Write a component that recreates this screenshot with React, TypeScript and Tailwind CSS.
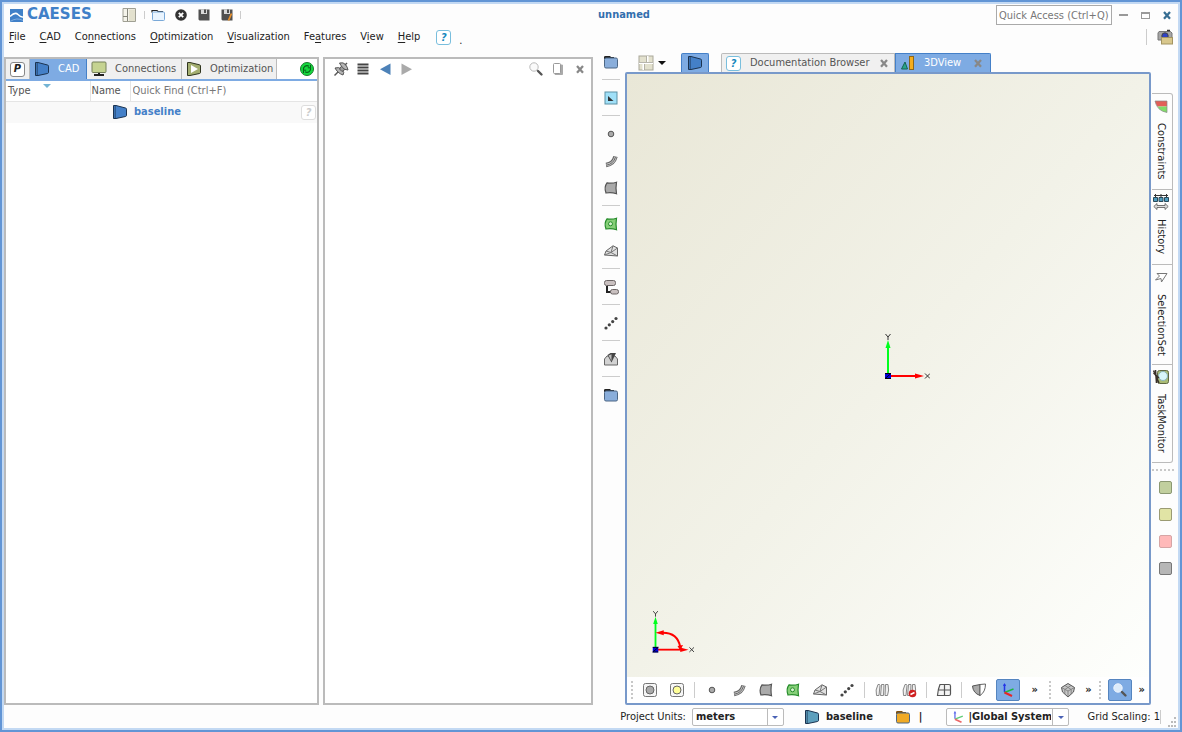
import type { ReactNode } from 'react'

type IconProps = { className?: string }

interface IconBoxProps extends IconProps {
  size?: number
  children: ReactNode
}

function IconBox({ size = 16, className = '', children }: IconBoxProps) {
  return (
    <svg width={size} height={size} viewBox="0 0 16 16" fill="none" className={`shrink-0 ${className}`} aria-hidden="true">
      {children}
    </svg>
  )
}

/* ---------- icons ---------- */

function Logo() {
  return (
    <div className="flex w-24 shrink-0 items-start gap-1">
      <svg width="13" height="13" viewBox="0 0 13 13" aria-hidden="true">
        <rect width="13" height="13" fill="#4080c8" />
        <path d="M0 7.500Q5 2.500 8 5.500T13 8" fill="none" stroke="#fff" strokeWidth="1.500" />
        <path d="M0 12.500Q7 8 13 11.500" fill="none" stroke="#8db8e6" strokeWidth="0.8" />
      </svg>
      <span className="font-['DejaVu_Sans',sans-serif] text-[15px] font-bold leading-[11px] text-[#4080c8]">CAESES</span>
    </div>
  )
}

function LayoutIcon({ className }: IconProps) {
  return (
    <IconBox className={className}>
      <path d="M2 1.500H14.500V14.500H2Z" fill="#f4f3ea" stroke="#a0a094" />
      <path d="M6.500 2V14M2 9.500H6.500" stroke="#85857b" />
      <rect x="8" y="2.500" width="6" height="11.500" fill="#e3e1ce" />
    </IconBox>
  )
}

function SplitIcon() {
  return (
    <IconBox>
      <rect x="1" y="1" width="14" height="14" fill="#e3e1ce" stroke="#aaa89a" />
      <path d="M9.500 1V8M5.500 8V15M1 8H15" stroke="#fff" strokeWidth="2" />
      <path d="M8.500 1V7M6.500 9V15M1 7.500H15" stroke="#99978a" strokeWidth=".7" />
    </IconBox>
  )
}

function FolderIcon({ fill = '#8aaedb', dark = '#222' }: { fill?: string; dark?: string }) {
  return (
    <IconBox>
      <path d="M1 5V3Q1 2 2.500 2H7L8 3H11V5Z" fill={dark} />
      <rect x="1.500" y="4" width="13" height="10" rx="1.500" fill={fill} stroke="#4d6785" />
    </IconBox>
  )
}

function OpenIcon() {
  return (
    <IconBox>
      <path d="M2 5.500V3.500H7L8 4.500H13" stroke="#222" strokeWidth="1.200" />
      <rect x="2.500" y="5" width="12" height="8.500" rx="1" fill="#e9f4fe" stroke="#7aa9d8" />
    </IconBox>
  )
}

function CloseCircleIcon() {
  return (
    <IconBox>
      <circle cx="8" cy="8" r="5.800" fill="#333" />
      <path d="M5.800 5.800 10.200 10.200M10.200 5.800 5.800 10.200" stroke="#fff" strokeWidth="1.800" />
    </IconBox>
  )
}

function SaveIcon({ pen = false }: { pen?: boolean }) {
  return (
    <IconBox>
      <path d="M2.500 2.500H13.500V13.500H3.500L2.500 12.500Z" fill="#505050" />
      <path d="M5 2.500H11V7H5Z" fill="#d8d8d8" />
      <path d="M8 2.500H10V6H8Z" fill="#505050" />
      {pen && <path d="M9.500 13.500 12.500 6.500" stroke="#e8902c" strokeWidth="1.800" />}
    </IconBox>
  )
}

function HelpIcon({ muted = false }: { muted?: boolean }) {
  return (
    <span
      className={`flex h-[15px] w-[15px] shrink-0 items-center justify-center rounded-[3px] border bg-white text-[11px] font-bold italic leading-none ${
        muted ? 'border-[#ddd] text-[#ccc]' : 'border-[#79bedd] text-[#1688bd]'
      }`}
    >
      ?
    </span>
  )
}

function BlockIcon({ fill = '#4480c8' }: { fill?: string }) {
  return (
    <IconBox>
      <path d="M1.500 1.500H4L13.500 4Q14.500 4.200 14.500 5.200V11.300Q14.500 12.300 13.500 12.500L4 14.500H1.500Z" fill={fill} stroke="#1b3350" />
      <path d="M3.200 2V14" stroke="#1b3350" strokeWidth=".7" />
    </IconBox>
  )
}

function MonitorIcon() {
  return (
    <IconBox>
      <rect x="1" y="1" width="14" height="10.500" rx="1" fill="#c5d391" stroke="#75805a" />
      <path d="M7 12H9V13H13V15H3V13H7Z" fill="#222" />
    </IconBox>
  )
}

function PlayIcon() {
  return (
    <IconBox>
      <path d="M1.500 1.500H4L13.500 3.800Q14.500 4 14.500 5V11.300Q14.500 12.300 13.500 12.500L4 14.500H1.500Z" fill="#a3ae70" stroke="#30351f" />
      <path d="M5 4 12 8 5 12Z" fill="#fff" />
    </IconBox>
  )
}

function RefreshIcon() {
  return (
    <IconBox>
      <circle cx="8" cy="8" r="6.500" fill="#14d83e" stroke="#187a2c" />
      <path d="M4.500 9A3.600 3.600 0 0 1 10 5.200M11.500 7A3.600 3.600 0 0 1 6 10.800" stroke="#075f19" strokeWidth="1.200" />
      <path d="M8.800 6.800H11.500V4M7.200 9.200H4.500V12" stroke="#075f19" />
    </IconBox>
  )
}

function PinIcon() {
  return (
    <IconBox>
      <g stroke="#555">
        <path d="M1.500 14.500 5.500 10.500" strokeWidth="1.500" />
        <path d="M2 7Q6 5.500 9 8.500T10 14Q7 13 5 11T2 7Z" fill="#b5b5b5" />
        <path d="M6.500 8 9 4.500 12.500 8 9 10.500Z" fill="#999" />
        <path d="M6.500 2Q10.500 1 12.500 3.500T15 9Q11.500 9 9.500 6.500T6.500 2Z" fill="#b5b5b5" />
        <path d="M12 4 14 2" strokeWidth="1.500" />
      </g>
    </IconBox>
  )
}

function ListIcon() {
  return (
    <IconBox>
      <path d="M2.500 3.500H13.500M2.500 6.500H13.500M2.500 9.500H13.500M2.500 12.500H13.500" stroke="#444" strokeWidth="2" />
    </IconBox>
  )
}

function TriangleIcon({ left = false }: { left?: boolean }) {
  return (
    <IconBox>
      {left ? <path d="M13.500 2.500V14L3 8.250Z" fill="#4d82b8" /> : <path d="M2.500 2.500V14L13 8.250Z" fill="#aaa" />}
    </IconBox>
  )
}

function SearchIcon({ light = false }: { light?: boolean }) {
  return (
    <IconBox>
      <circle cx="6" cy="6" r="4.200" fill={light ? '#dcebfa' : '#fafafa'} stroke={light ? '#eef5ff' : '#bbb'} />
      <path d="M10 10 13.500 13.500" stroke="#555" strokeWidth="2.400" strokeLinecap="round" />
    </IconBox>
  )
}

function CopyIcon() {
  return (
    <IconBox>
      <path d="M5 4H12.500V13.500H5Z" fill="#aaa" stroke="#aaa" strokeLinejoin="round" />
      <rect x="3.500" y="2.500" width="7" height="10" rx="1" fill="#fff" stroke="#999" />
    </IconBox>
  )
}

function CrossIcon({ className = 'text-[#888]' }: IconProps) {
  return (
    <IconBox size={12} className={className}>
      <path d="M4 4 12 13M12 4 4 13" stroke="currentColor" strokeWidth="3" />
    </IconBox>
  )
}

function ScaleIcon() {
  return (
    <IconBox>
      <rect x="2" y="2" width="12" height="12" fill="#a0e0f8" stroke="#5d91a5" />
      <path d="M5 6V11H10.500Z" fill="#333" />
    </IconBox>
  )
}

function PointIcon() {
  return (
    <IconBox>
      <circle cx="8" cy="8" r="2.800" fill="#aaa" stroke="#555" />
    </IconBox>
  )
}

function CurveIcon() {
  return (
    <IconBox>
      <path d="M3 12Q10.500 11 12.500 3.500" stroke="#666" strokeWidth="4.500" />
      <path d="M3.500 12Q10.500 11 12.500 4" stroke="#ccc" strokeWidth="2.500" />
      <path d="M3.500 12.200Q10.500 11 12.500 4" stroke="#666" />
    </IconBox>
  )
}

function SurfaceIcon({ green = false }: { green?: boolean }) {
  return (
    <IconBox>
      <path
        d="M4 2.800Q9 3.800 13.500 2.200 12.500 8 13.500 13.800 8 11.800 3 13 .8 7 4 2.800Z"
        fill={green ? '#86cf78' : '#aaa'}
        stroke={green ? '#268c2b' : '#555'}
        strokeWidth="1.200"
      />
      {green && <circle cx="7.500" cy="7.800" r="2" fill="#d9f3d2" stroke="#268c2b" />}
    </IconBox>
  )
}

function MeshIcon() {
  return (
    <IconBox>
      <path d="M1.500 12 3 8 10 2.800 14.500 5V13Z" fill="#e0e0e0" stroke="#666" />
      <path d="M1.500 12 8 9.500 14.500 5M10 2.800 8 9.500 14.500 13M3 8 8 9.500" stroke="#777" />
    </IconBox>
  )
}

function NodesIcon() {
  return (
    <IconBox>
      <path d="M4 7V13H8" stroke="#222" strokeWidth="2" />
      <rect x="1.500" y="1.500" width="11" height="5" rx="2" fill="#c9c0c0" stroke="#6b6464" />
      <rect x="7.500" y="10.500" width="8" height="4.500" rx="2" fill="#c9c0c0" stroke="#6b6464" />
    </IconBox>
  )
}

function DotsIcon() {
  return (
    <IconBox>
      <g fill="#444">
        <circle cx="3" cy="13" r="1.600" />
        <circle cx="6.300" cy="9.800" r="1.600" />
        <circle cx="9.700" cy="6.600" r="1.600" />
        <circle cx="13" cy="3.500" r="1.600" />
      </g>
    </IconBox>
  )
}

function FeatureIcon() {
  return (
    <IconBox>
      <path d="M1.500 8 4 5H12L14.500 8V14H1.500Z" fill="#d2d2d2" stroke="#666" />
      <path d="M4.500 4 7.500 2H13L8.500 11.500Q7 9 4.500 4Z" fill="#444" />
      <path d="M5.500 4.500 8.500 3.200V10Z" fill="#bbb" />
    </IconBox>
  )
}

function View3DIcon() {
  return (
    <IconBox>
      <path d="M1.500 14 5 7 7.500 14Z" fill="#28a58a" stroke="#186351" />
      <rect x="9.500" y="1.500" width="4" height="13" fill="#f5ad1c" stroke="#8d671a" />
    </IconBox>
  )
}

function CameraIcon() {
  return (
    <IconBox>
      <path d="M2 2.500H13.500L15 4V11H1V4Z" fill="#a5a5a5" stroke="#777" />
      <circle cx="8" cy="7" r="3.200" fill="#2f42c5" stroke="#444" />
      <rect x="4.500" y="8.500" width="11" height="6.500" fill="#d8c78c" stroke="#a39462" />
      <path d="M10 1.500H13" stroke="#333" strokeWidth="1.500" />
    </IconBox>
  )
}

function BulbIcon({ fill }: { fill: string }) {
  return (
    <IconBox>
      <rect x="1.500" y="1.500" width="13" height="13" rx="2" fill="#f6f6f6" stroke="#777" />
      <circle cx="8" cy="8" r="4" fill={fill} stroke="#666" />
    </IconBox>
  )
}

function StripsIcon({ blocked = false }: { blocked?: boolean }) {
  return (
    <IconBox>
      <path d="M4 2.500Q6 2 6 3.500L5 13.500H2.500Q1 8 4 2.500ZM7.500 2.500H10L9.500 13.500H6.500ZM11.500 2.500H14Q15.500 8 13.500 13.500H11Z" fill="#f0f0f0" stroke="#888" />
      {blocked && (
        <>
          <circle cx="11.500" cy="11.500" r="3.800" fill="#cf2020" />
          <path d="M9.500 12.500 13.500 10.500" stroke="#fff" strokeWidth="1.500" />
        </>
      )}
    </IconBox>
  )
}

function GridIcon() {
  return (
    <IconBox>
      <path d="M4 2.500H13Q14.500 2.500 14.500 4V12Q14.500 13.500 13 13.500H1.500Q2 7 4 2.500ZM8.500 2.500V13.500M2 8H14" fill="#f4f4f4" stroke="#555" strokeWidth="1.200" />
    </IconBox>
  )
}

function ClipIcon() {
  return (
    <IconBox>
      <path d="M1.500 4 9 2.500V13.500Q2 11 1.500 4Z" fill="#aaa" stroke="#555" />
      <path d="M9 2.500 14.500 2Q14.500 10 9 13.500Z" fill="#fff" stroke="#666" />
    </IconBox>
  )
}

function AxesIcon({ faded = false }: { faded?: boolean }) {
  return (
    <IconBox className={faded ? 'opacity-70' : ''} size={faded ? 14 : 16}>
      <path d="M4.500 10V2" stroke="#2334e5" strokeWidth="1.500" />
      <path d="M3 4 4.500 1 6 4Z" fill="#2334e5" />
      <path d="M4.500 10.500 13.500 7" stroke="#1cb840" strokeWidth="1.500" />
      <path d="M4.500 10.500 12 14" stroke="#e52626" strokeWidth="2" />
    </IconBox>
  )
}

function CubeIcon() {
  return (
    <IconBox>
      <path d="M8 1.500 14.500 5.500 13.500 10 8 15 2.500 10 1.500 5.500Z" fill="#c6c6c6" stroke="#555" />
      <path d="M1.500 5.500 8 9 14.500 5.500M8 9V15M5 3.500 11.200 7.500V12M11 3.500 4.800 7.500V12" stroke="#777" strokeWidth=".8" />
    </IconBox>
  )
}

function ConstraintIcon() {
  return (
    <IconBox>
      <path d="M2 3H14V8.500H4.500Q2.500 6 2 3Z" fill="#e25f58" />
      <path d="M4.500 8.500H14V14.500Q7.500 13.500 4.500 8.500Z" fill="#80db68" />
      <path d="M2 3Q4 13 14 14.500V3Z" stroke="#888" strokeWidth=".7" />
    </IconBox>
  )
}

function HistoryIcon() {
  return (
    <IconBox>
      <path d="M2.500 4V0M8 4V0M13.500 4V0M1 1.500H15" stroke="#333" />
      <path d="M.5 3.500H4.500V7.500H.5ZM6 3.500H10V7.500H6ZM11.500 3.500H15.500V7.500H11.500Z" fill="#4e9cbe" stroke="#29495a" />
      <path d="M4 9.500 .8 12.500 4 15.500V13.500H12V15.500L15.200 12.500 12 9.500V11.500H4Z" fill="#ddd" stroke="#555" strokeWidth=".8" />
    </IconBox>
  )
}

function SelectionIcon() {
  return (
    <IconBox>
      <path d="M4 4.500H14L8.500 13 8 9.500 2.500 11 6.500 7Z" fill="#fff" stroke="#777" />
    </IconBox>
  )
}

function TaskIcon() {
  return (
    <IconBox>
      <rect x="4.500" y="1.500" width="11" height="13" rx="2" fill="#a9bb75" stroke="#5f6843" />
      <circle cx="10" cy="7" r="4.500" fill="#d9f6fb" stroke="#8bb3ba" />
      <path d="M.5 1.500 6 14M2.500 1 3.500 14M.5 4 6 9" stroke="#3a3029" strokeWidth="1.500" />
    </IconBox>
  )
}

/* ---------- small parts ---------- */

const focusRing = 'focus-visible:outline focus-visible:outline-1 focus-visible:outline-[#4480c8]'

function IconButton({ label, active = false, children }: { label: string; active?: boolean; children: ReactNode }) {
  return (
    <button
      aria-label={label}
      title={label}
      className={`flex shrink-0 items-center justify-center rounded-xs ${focusRing} ${
        active ? 'h-[22px] w-6 border border-[#5585bf] bg-[#7eabe3]' : 'h-5 w-5 hover:bg-[#e4eefb]'
      }`}
    >
      {children}
    </button>
  )
}

function Handle() {
  return <span className="h-[18px] shrink-0 border-l-2 border-dotted border-[#c8c8c8]" />
}

function Divider() {
  return <span className="h-4 w-px shrink-0 bg-[#ccc]" />
}

function AxisCross({ arc = false }: { arc?: boolean }) {
  return (
    <svg width={arc ? 44 : 48} height={arc ? 48 : 52} viewBox="0 0 48 52" fill="none" aria-hidden="true">
      <path d="M6 42V12" stroke="#00ff1e" strokeWidth="2" />
      <path d="M3.500 14 6 6 8.500 14Z" fill="#00ff1e" />
      <path d="M6 42H35" stroke="#f00" strokeWidth="2" />
      <path d="M33 39.500 42 42 33 44.500Z" fill="#f00" />
      {arc && (
        <>
          <path d="M12 23.500Q30 22.500 33 39" stroke="#f00" strokeWidth="2.200" />
          <path d="M15 20.800 6 23.500 15 26.200ZM30 38 33 43 36 37Z" fill="#f00" />
        </>
      )}
      <rect x="3" y="39" width="6" height="6" fill="#00d" />
      <path d="M3 39.500H9L3 44.500H9" stroke="#001" />
      <path d="M3.500 0 6 3 8.500 0M6 3V6M43 39.500 48 44.500M48 39.500 43 44.500" stroke="#333" />
    </svg>
  )
}

/* ---------- data ---------- */

const menus = [
  { key: 'F', before: '', after: 'ile' },
  { key: 'C', before: '', after: 'AD' },
  { key: 'n', before: 'Co', after: 'nections' },
  { key: 'O', before: '', after: 'ptimization' },
  { key: 'V', before: '', after: 'isualization' },
  { key: 'a', before: 'Fe', after: 'tures' },
  { key: 'i', before: 'V', after: 'ew' },
  { key: 'H', before: '', after: 'elp' },
]

const toolGroups = [
  [{ label: 'Scope', icon: <FolderIcon /> }],
  [{ label: 'Scale', icon: <ScaleIcon /> }],
  [
    { label: 'Point', icon: <PointIcon /> },
    { label: 'Curve', icon: <CurveIcon /> },
    { label: 'Surface', icon: <SurfaceIcon /> },
  ],
  [
    { label: 'BRep', icon: <SurfaceIcon green /> },
    { label: 'Mesh', icon: <MeshIcon /> },
  ],
  [{ label: 'Transformation', icon: <NodesIcon /> }],
  [{ label: 'Point set', icon: <DotsIcon /> }],
  [{ label: 'Feature', icon: <FeatureIcon /> }],
  [{ label: 'Group', icon: <FolderIcon /> }],
]

const sideTabs = [
  { label: 'Constraints', icon: <ConstraintIcon />, size: 'h-[95px]' },
  { label: 'History', icon: <HistoryIcon />, size: 'h-[75px]' },
  { label: 'SelectionSet', icon: <SelectionIcon />, size: 'h-[100px]' },
  { label: 'TaskMonitor', icon: <TaskIcon />, size: 'h-[98px]' },
]

const swatches = [
  { label: 'Green', color: 'border-[#8b9872] bg-[#c1cf9e]' },
  { label: 'Yellow', color: 'border-[#9b9b73] bg-[#e1e4a5]' },
  { label: 'Red', color: 'border-[#d6a5a5] bg-[#ffb9b9]' },
  { label: 'Gray', color: 'border-[#777] bg-[#b6b6b6]' },
]

/* ---------- sections ---------- */

function TitleBar() {
  return (
    <div className="flex h-6 items-center pl-[7px] pr-px">
      <div className="flex flex-1 items-center gap-[7px]">
        <Logo />
        <div className="ml-1.5 flex items-center gap-[3px]">
          <IconButton label="Layout"><LayoutIcon /></IconButton>
          <span className="ml-0.5 h-2 w-px bg-[#ccc]" />
          <IconButton label="Open"><OpenIcon /></IconButton>
          <IconButton label="Close project"><CloseCircleIcon /></IconButton>
          <IconButton label="Save"><SaveIcon /></IconButton>
          <IconButton label="Save as"><SaveIcon pen /></IconButton>
          <span className="h-2 w-px bg-[#ccc]" />
        </div>
      </div>
      <h1 className="ml-15 text-[11px] font-bold text-[#336fae]">unnamed</h1>
      <div className="flex flex-1 items-center justify-end">
        <input
          aria-label="Quick Access"
          placeholder="Quick Access (Ctrl+Q)"
          className="h-5 w-[116px] border border-[#aaa] bg-white px-0.5 text-[11px] outline-none placeholder:text-[#777] focus:border-[#4480c8]"
        />
        <button aria-label="Minimize" className="flex h-5 w-[22px] items-center justify-center">
          <span className="h-0.5 w-[9px] bg-[#999]" />
        </button>
        <button aria-label="Maximize" className="flex h-5 w-[22px] items-center justify-center">
          <span className="h-[7px] w-[9px] border border-t-2 border-[#999]" />
        </button>
        <button aria-label="Close" className="flex h-5 w-[22px] items-center justify-center">
          <CrossIcon className="text-[#376e92]" />
        </button>
      </div>
    </div>
  )
}

function MenuBar() {
  return (
    <nav className="flex h-5 items-center pl-1.5 pr-1">
      {menus.map((m) => (
        <button key={m.before + m.key} className="mr-3.5 hover:text-[#336fae]">
          {m.before}
          <span className="underline underline-offset-2">{m.key}</span>
          {m.after}
        </button>
      ))}
      <button aria-label="Context help" className="ml-0.5"><HelpIcon /></button>
      <span className="ml-2 mt-2">.</span>
      <div className="ml-auto flex items-center gap-2">
        <Divider />
        <IconButton label="Screenshot"><CameraIcon /></IconButton>
      </div>
    </nav>
  )
}

function TreePanel() {
  return (
    <section className="w-[315px] shrink-0 border-2 border-[#bbb] bg-white">
      <div className="flex h-[22px] items-stretch border-b-2 border-[#7eabe3] text-[#555]">
        <button aria-label="Parameters" className="flex w-6 items-center justify-center border-r border-[#bbb] bg-[#f0f0f0]">
          <span className="flex h-[15px] w-[15px] items-center justify-center rounded-[3px] border border-[#888] bg-white text-[11px] font-bold italic text-[#222]">P</span>
        </button>
        <button className="flex w-[57px] items-center gap-2 border-r border-[#4480c8] bg-[#7eabe3] pl-1 text-white">
          <BlockIcon />CAD
        </button>
        <button className="flex w-[95px] items-center gap-2 border-r border-[#bbb] bg-[#f0f0f0] pl-1">
          <MonitorIcon />Connections
        </button>
        <button className="flex w-[95px] items-center gap-2 border-r border-[#bbb] bg-[#f0f0f0] pl-1">
          <PlayIcon />Optimization
        </button>
        <button aria-label="Refresh" className="ml-auto mr-0.5"><RefreshIcon /></button>
      </div>
      <table className="w-full table-fixed border-collapse text-left text-[#555]">
        <thead>
          <tr className="h-5 border-b border-[#e5e5e5]">
            <th className="w-[84px] border-r border-[#e5e5e5] pl-0.5 font-normal">
              <div className="flex items-center">
                Type
                <svg width="8" height="4" viewBox="0 0 8 4" className="ml-3 self-start" aria-hidden="true">
                  <path d="M0 0H8L4 4Z" fill="#74b4d4" />
                </svg>
              </div>
            </th>
            <th className="w-10 border-r border-[#e5e5e5] pl-px font-normal">Name</th>
            <th className="pl-0.5 font-normal">
              <input
                aria-label="Quick Find"
                placeholder="Quick Find (Ctrl+F)"
                className="block w-full bg-transparent outline-none placeholder:text-[#777]"
              />
            </th>
          </tr>
        </thead>
        <tbody>
          <tr className="h-[22px] bg-[#f9f9f9]">
            <td colSpan={3} className="pl-[106px] pr-px">
              <div className="flex items-center gap-[6px] font-bold text-[#4480c8]">
                <BlockIcon />
                <span className="flex-1">baseline</span>
                <HelpIcon muted />
              </div>
            </td>
          </tr>
        </tbody>
      </table>
    </section>
  )
}

function EditorPanel() {
  return (
    <section className="ml-1 w-[270px] shrink-0 border-2 border-[#bbb] bg-white">
      <div className="flex h-5 items-center gap-0.5 pl-1.5 pr-px">
        <IconButton label="Pin"><PinIcon /></IconButton>
        <IconButton label="List"><ListIcon /></IconButton>
        <IconButton label="Back"><TriangleIcon left /></IconButton>
        <IconButton label="Forward"><TriangleIcon /></IconButton>
        <div className="ml-auto flex items-center gap-0.5">
          <IconButton label="Search"><SearchIcon /></IconButton>
          <IconButton label="Copy"><CopyIcon /></IconButton>
          <IconButton label="Close panel"><CrossIcon /></IconButton>
        </div>
      </div>
    </section>
  )
}

function ToolColumn() {
  return (
    <div className="-mt-[5px] flex w-8 shrink-0 flex-col items-center pl-1">
      {toolGroups.map((group, i) => (
        <div
          key={group[0].label}
          className={`flex w-[18px] flex-col items-center gap-[7px] py-[7px] ${i > 0 ? 'border-t border-[#ccc] pt-2' : 'pt-0'}`}
        >
          {group.map((t) => (
            <IconButton key={t.label} label={t.label}>{t.icon}</IconButton>
          ))}
        </div>
      ))}
    </div>
  )
}

function ViewTabs() {
  return (
    <div className="flex h-[19px] items-stretch text-[#555]">
      <button aria-label="Split view" className="ml-[13px] flex items-center gap-1">
        <SplitIcon />
        <svg width="8" height="4" viewBox="0 0 8 4" aria-hidden="true">
          <path d="M0 0H8L4 4Z" fill="#111" />
        </svg>
      </button>
      <button aria-label="Block view" className="ml-[15px] flex w-7 items-center justify-center rounded-t-xs border border-b-0 border-[#4480c8] bg-[#7eabe3]">
        <BlockIcon />
      </button>
      <div className="ml-3 flex w-[174px] items-center rounded-tl-xs border border-b-0 border-[#bbb] bg-[#f0f0f0] px-1">
        <HelpIcon />
        <button className="ml-[9px] flex-1 whitespace-nowrap text-left">Documentation Browser</button>
        <button aria-label="Close Documentation Browser"><CrossIcon /></button>
      </div>
      <div className="flex w-24 items-center rounded-tr-xs border border-b-0 border-[#4480c8] bg-[#7eabe3] pl-1 pr-1.5 text-white">
        <View3DIcon />
        <button className="ml-2 flex-1 text-left">3DView</button>
        <button aria-label="Close 3DView"><CrossIcon /></button>
      </div>
    </div>
  )
}

function ViewToolbar() {
  return (
    <div className="flex h-[26px] items-center gap-[7px] overflow-hidden bg-white px-1">
      <Handle />
      <IconButton label="Lighting"><BulbIcon fill="#aaa" /></IconButton>
      <IconButton label="Highlight"><BulbIcon fill="#ffff98" /></IconButton>
      <Divider />
      <IconButton label="Show points"><PointIcon /></IconButton>
      <IconButton label="Show curves"><CurveIcon /></IconButton>
      <IconButton label="Show surfaces"><SurfaceIcon /></IconButton>
      <IconButton label="Show breps"><SurfaceIcon green /></IconButton>
      <IconButton label="Show meshes"><MeshIcon /></IconButton>
      <IconButton label="Show point sets"><DotsIcon /></IconButton>
      <Divider />
      <IconButton label="Show strips"><StripsIcon /></IconButton>
      <IconButton label="Hide strips"><StripsIcon blocked /></IconButton>
      <Divider />
      <IconButton label="Grid"><GridIcon /></IconButton>
      <Divider />
      <IconButton label="Clip"><ClipIcon /></IconButton>
      <IconButton label="Axes" active><AxesIcon /></IconButton>
      <button aria-label="More axes options" className="w-5 font-bold">»</button>
      <Handle />
      <IconButton label="Perspective"><CubeIcon /></IconButton>
      <button aria-label="More perspective options" className="w-2 font-bold">»</button>
      <Handle />
      <IconButton label="Zoom" active><SearchIcon light /></IconButton>
      <button aria-label="More zoom options" className="w-2 font-bold">»</button>
    </div>
  )
}

function ViewArea() {
  return (
    <main className="-mt-1 flex min-w-0 flex-1 flex-col">
      <ViewTabs />
      <div className="flex flex-1 flex-col rounded-xs border-2 border-[#7899ca]">
        <div className="relative flex flex-1 items-center justify-center bg-linear-to-br from-[#e9e7d7] via-[#f2f2e8] to-[#fefffd]">
          <div className="pb-8 pl-9">
            <AxisCross />
          </div>
          <div className="absolute bottom-[18px] left-[23px]">
            <AxisCross arc />
          </div>
        </div>
        <ViewToolbar />
      </div>
    </main>
  )
}

function SideStrip() {
  return (
    <aside className="flex w-7 shrink-0 flex-col pl-px pt-9">
      <div className="w-[21px] rounded-r-[3px] border border-l-0 border-[#bbb]">
        {sideTabs.map((tab) => (
          <button
            key={tab.label}
            className={`flex w-full flex-col items-center gap-[9px] border-t border-[#bbb] pr-0.5 pt-1 first:border-t-0 ${tab.size}`}
          >
            {tab.icon}
            <span className="[writing-mode:vertical-rl]">{tab.label}</span>
          </button>
        ))}
      </div>
      <span className="mt-1.5 w-[22px] border-t-2 border-dotted border-[#c8c8c8]" />
      <div className="mt-2.5 flex flex-col items-center gap-3.5">
        {swatches.map((s) => (
          <button key={s.label} aria-label={s.label} className={`h-[13px] w-[13px] rounded-xs border ${s.color}`} />
        ))}
      </div>
    </aside>
  )
}

function DropArrow() {
  return (
    <span className="pointer-events-none absolute inset-y-0 right-0 flex w-4 items-center justify-center border-l border-[#bbb]">
      <svg width="6" height="3" viewBox="0 0 6 3" aria-hidden="true">
        <path d="M0 0H6L3 3Z" fill="#4a62b5" />
      </svg>
    </span>
  )
}

function StatusBar() {
  return (
    <footer className="flex h-6 items-center justify-end pr-0.5">
      <label htmlFor="units" className="mr-1.5">Project Units:</label>
      <div className="relative flex h-[18px] w-[92px] rounded-xs border border-[#bbb] bg-white">
        <select id="units" className="w-full appearance-none pl-[3px] font-bold outline-none">
          <option>meters</option>
        </select>
        <DropArrow />
      </div>
      <div className="ml-5 flex items-center gap-1.5 font-bold">
        <BlockIcon fill="#5d9fbd" />
        baseline
      </div>
      <div className="ml-[22px] flex items-center gap-2 font-bold">
        <FolderIcon fill="#f0aa25" dark="#80500c" />
        |
      </div>
      <div className="relative ml-6 flex h-[18px] w-[123px] items-center rounded-xs border border-[#bbb] bg-white pl-1">
        <AxesIcon faded />
        <select aria-label="Coordinate system" className="w-[86px] appearance-none overflow-hidden pl-[3px] font-bold outline-none">
          <option>|Global System</option>
        </select>
        <DropArrow />
      </div>
      <span className="ml-[18px] border-r border-[#ccc]">Grid Scaling: 1</span>
      <svg width="10" height="10" viewBox="0 0 10 10" className="ml-1.5 mt-2.5" aria-hidden="true">
        <path d="M7 0H9V2H7ZM4 4H6V6H4ZM7 4H9V6H7ZM1 8H3V10H1ZM4 8H6V10H4ZM7 8H9V10H7Z" fill="#bbb" />
      </svg>
    </footer>
  )
}

export default function App() {
  return (
    <div className="flex min-h-screen flex-col border-2 border-[#6295d5] bg-[#fdfdfd] p-px font-['DejaVu_Sans_Condensed','DejaVu_Sans',sans-serif] text-[11px] leading-[14px] text-[#222] shadow-[inset_0_0_0_2px_#c3d9f3]">
      <TitleBar />
      <MenuBar />
      <div className="mt-2.5 flex flex-1 pl-px">
        <TreePanel />
        <EditorPanel />
        <ToolColumn />
        <ViewArea />
        <SideStrip />
      </div>
      <StatusBar />
    </div>
  )
}
